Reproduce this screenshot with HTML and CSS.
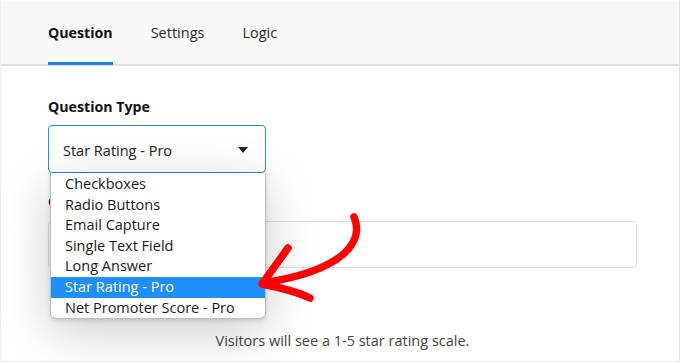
FILE: index.html
```html
<!DOCTYPE html>
<html>
<head>
<meta charset="utf-8">
<link rel="stylesheet" href="styles.css">
</head>
<body>
<div class="page">
  <div class="tabs">
    <div class="tab active">Question</div>
    <div class="tab">Settings</div>
    <div class="tab">Logic</div>
  </div>
  <div class="content">
    <div class="label">Question Type</div>
    <div class="select-wrap">
      <div class="select">
        <span>Star Rating - Pro</span>
        <span class="caret"></span>
      </div>
      <ul class="menu">
        <li>Checkboxes</li>
        <li>Radio Buttons</li>
        <li>Email Capture</li>
        <li>Single Text Field</li>
        <li>Long Answer</li>
        <li class="selected">Star Rating - Pro</li>
        <li>Net Promoter Score - Pro</li>
      </ul>
    </div>
    <div class="label label-title">Question Title</div>
    <div class="input"></div>
    <div class="help">Visitors will see a 1-5 star rating scale.</div>
  </div>
  <svg class="arrow" width="680" height="362" viewBox="0 0 680 362">
    <path d="M353 217 C363 240 346 270 262 283" fill="none" stroke="#ff0000" stroke-width="7.5" stroke-linecap="round"/>
    <path d="M287 248 L261 284 C276 287 295 291 309 298" fill="none" stroke="#ff0000" stroke-width="7.5" stroke-linecap="round" stroke-linejoin="round"/>
  </svg>
</div>
</body>
</html>
```
FILE: styles.css
```css
* { box-sizing: border-box; }
html, body { margin: 0; padding: 0; }
body {
  font-family: "Open Sans", "Noto Sans", sans-serif;
  font-size: 14.5px;
  color: #1e1e1e;
  background: #fff;
}
.page {
  position: relative;
  width: 680px;
  height: 362px;
  overflow: hidden;
  border-right: 1px solid #e2e2e2;
  border-left: 1px solid #f0f0f0;
  border-bottom: 1px solid #e6e6e6;
  background: #fff;
}
.tabs {
  display: flex;
  gap: 38px;
  height: 66px;
  padding-left: 47px;
  background: #f8f8f8;
  border-bottom: 2px solid #e0e0e0;
  border-top: 1px solid #fcfcfc;
}
.tab {
  height: 64px;
  line-height: 63px;
  font-size: 14.5px;
  color: #2b2b2b;
  border-bottom: 3px solid transparent;
}
.tab.active {
  font-weight: 700;
  font-size: 14.2px;
  color: #111;
  border-bottom-color: #1a80e6;
}
.content {
  padding: 31px 42px 0 47px;
}
.label {
  font-weight: 700;
  font-size: 14.2px;
  line-height: 20px;
  color: #111;
}
.select-wrap {
  position: relative;
  width: 218px;
  margin-top: 8px;
}
.select {
  height: 48px;
  border: 1.5px solid #2684f0;
  border-radius: 4px;
  display: flex;
  align-items: center;
  justify-content: space-between;
  padding: 2px 17px 0 14px;
  font-size: 14.5px;
  color: #222;
  background: #fff;
}
.caret {
  width: 0;
  height: 0;
  border-left: 5px solid transparent;
  border-right: 5px solid transparent;
  border-top: 6px solid #222;
}
.menu {
  position: absolute;
  top: 48px;
  left: 2px;
  width: 216px;
  margin: 0;
  padding: 1px 0 0;
  list-style: none;
  background: #fff;
  border: 1px solid #bdbdbd;
  border-top: none;
  border-radius: 0 0 6px 6px;
  box-shadow: 0 12px 50px rgba(0,0,0,0.2), 0 2px 4px rgba(0,0,0,0.12);
  z-index: 2;
}
.menu li {
  height: 20.6px;
  line-height: 20.6px;
  padding-left: 14px;
  font-size: 14.5px;
  color: #1a1a1a;
}
.menu li.selected {
  background: #1e8ff8;
  color: #fff;
}
.label-title {
  margin-top: 19px;
}
.input {
  margin-top: 9px;
  height: 47px;
  border: 1px solid #dedede;
  border-radius: 4px;
}
.help {
  margin-top: 63px;
  text-align: center;
  font-size: 14.5px;
  color: #444;
}
.arrow {
  position: absolute;
  left: 0;
  top: 0;
  z-index: 3;
  pointer-events: none;
}
```
